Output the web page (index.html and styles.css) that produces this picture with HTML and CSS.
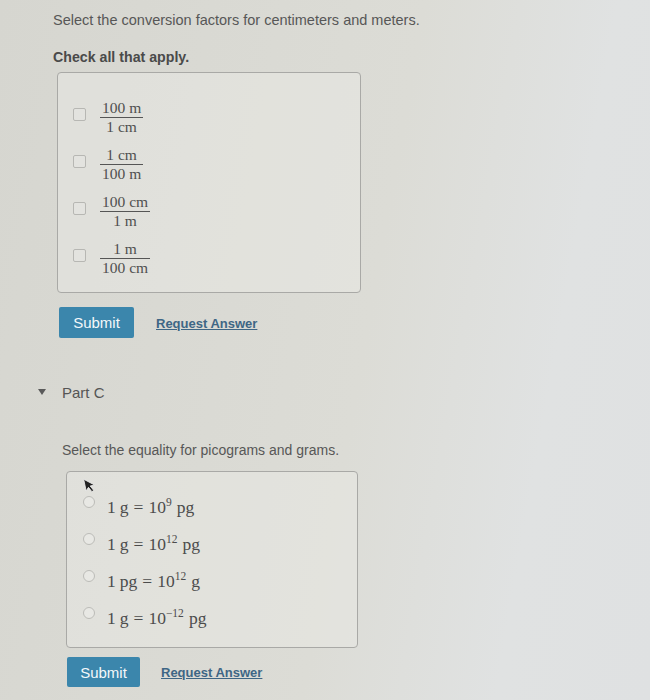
FILE: index.html
```html
<!DOCTYPE html>
<html>
<head>
<meta charset="utf-8">
<link rel="stylesheet" href="styles.css">
</head>
<body>
<div class="page">
  <section class="part1">
    <p class="q1">Select the conversion factors for centimeters and meters.</p>
    <p class="check">Check all that apply.</p>
    <div class="box box1">
      <div class="opt"><span class="cb"></span><span class="frac"><span class="num">100 m</span><span class="den">1 cm</span></span></div>
      <div class="opt"><span class="cb"></span><span class="frac"><span class="num">1 cm</span><span class="den">100 m</span></span></div>
      <div class="opt"><span class="cb"></span><span class="frac"><span class="num">100 cm</span><span class="den">1 m</span></span></div>
      <div class="opt"><span class="cb"></span><span class="frac"><span class="num">1 m</span><span class="den">100 cm</span></span></div>
    </div>
    <div class="actions actions1">
      <button class="submit">Submit</button>
      <a class="req" href="#">Request Answer</a>
    </div>
  </section>

  <section class="partc">
    <div class="part-head"><span class="tri"></span><span class="part-title">Part C</span></div>
    <div class="part-body">
      <p class="q2">Select the equality for picograms and grams.</p>
      <div class="box box2">
        <div class="ropt"><span class="rb"></span><span class="math">1<span class="sp"></span>g<span class="eq">=</span>10<sup>9</sup><span class="sp2"></span>pg</span></div>
        <div class="ropt"><span class="rb"></span><span class="math">1<span class="sp"></span>g<span class="eq">=</span>10<sup>12</sup><span class="sp2"></span>pg</span></div>
        <div class="ropt"><span class="rb"></span><span class="math">1<span class="sp"></span>pg<span class="eq">=</span>10<sup>12</sup><span class="sp2"></span>g</span></div>
        <div class="ropt"><span class="rb"></span><span class="math">1<span class="sp"></span>g<span class="eq">=</span>10<sup>−12</sup><span class="sp2"></span>pg</span></div>
        <svg class="cursor" width="12" height="16" viewBox="0 0 12 16"><path d="M1 1 L1 13 L4 10 L6.5 15 L8.5 14 L6 9 L10.5 9 Z" fill="#222" stroke="#eee" stroke-width="0.8"/></svg>
      </div>
      <div class="actions actions2">
        <button class="submit submit2">Submit</button>
        <a class="req" href="#">Request Answer</a>
      </div>
    </div>
  </section>
</div>
</body>
</html>
```

FILE: styles.css
```css
html, body {
  margin: 0;
  padding: 0;
}
body {
  width: 650px;
  height: 700px;
  overflow: hidden;
  background: linear-gradient(100deg, #d6d6d0 0%, #dcdcd6 55%, #e0e2e2 80%, #dfe1e2 100%);
  font-family: "Liberation Sans", Arial, sans-serif;
  color: #575757;
}
.page {
  padding-top: 11px;
}
p { margin: 0; }

.part1 {
  margin-left: 53px;
}
.q1 {
  font-size: 14.5px;
  line-height: 18px;
}
.check {
  margin-top: 19px;
  font-size: 14.2px;
  line-height: 18px;
  font-weight: bold;
  color: #4a4a4a;
}
.box {
  box-sizing: border-box;
  border: 1px solid #a9a9a6;
  border-radius: 4px;
  background: rgba(235, 235, 230, 0.45);
  position: relative;
}
.box1 {
  margin-top: 6px;
  margin-left: 4px;
  width: 304px;
  height: 221px;
  padding-top: 21px;
}
.opt {
  height: 47px;
  display: flex;
  align-items: center;
}
.cb {
  width: 11px;
  height: 11px;
  border: 1px solid #b7b7b3;
  border-radius: 2px;
  background: #e3e3df;
  margin-left: 15px;
  margin-bottom: 6px;
}
.frac {
  margin-left: 14px;
  display: inline-flex;
  flex-direction: column;
  align-items: center;
  font-family: "Liberation Serif", "Times New Roman", serif;
  font-size: 15.5px;
  line-height: 16px;
  color: #505050;
}
.num {
  padding: 0 2px 1px;
  border-bottom: 1px solid #555;
  align-self: stretch;
  text-align: center;
}
.den {
  padding: 1px 2px 0;
}

.actions {
  display: flex;
  align-items: center;
}
.actions1 {
  margin-top: 14px;
  margin-left: 6px;
}
.submit {
  width: 75px;
  height: 31px;
  border: none;
  border-radius: 2px;
  background: #3b86ac;
  color: #f4f8fa;
  font-family: "Liberation Sans", Arial, sans-serif;
  font-size: 15px;
  padding: 0;
}
.req {
  margin-left: 22px;
  font-size: 13px;
  font-weight: bold;
  color: #3e6685;
  text-decoration: underline;
  margin-top: 1px;
}

.partc {
  margin-top: 44px;
}
.part-head {
  display: flex;
  align-items: center;
  height: 20px;
  padding-left: 38px;
}
.tri {
  width: 0;
  height: 0;
  border-left: 4.5px solid transparent;
  border-right: 4.5px solid transparent;
  border-top: 6px solid #5a5a5a;
}
.part-title {
  margin-left: 16px;
  font-size: 15px;
  color: #555;
}
.part-body {
  margin-left: 62px;
}
.q2 {
  margin-top: 39px;
  font-size: 14px;
  line-height: 18px;
}
.box2 {
  margin-top: 12px;
  margin-left: 4px;
  width: 292px;
  height: 177px;
  padding-top: 16px;
}
.ropt {
  height: 37px;
  display: flex;
  align-items: center;
}
.rb {
  width: 10px;
  height: 10px;
  border: 1px solid #bcbcb8;
  border-radius: 50%;
  background: #e8e8e4;
  margin-left: 16px;
  margin-bottom: 9px;
}
.math {
  margin-left: 12px;
  font-family: "Liberation Serif", "Times New Roman", serif;
  font-size: 17.5px;
  line-height: 20px;
  color: #4c4c4c;
  white-space: nowrap;
}
.math sup {
  font-size: 11.5px;
  line-height: 0;
  vertical-align: 7px;
}
.sp { display: inline-block; width: 4px; }
.sp2 { display: inline-block; width: 5px; }
.eq { margin: 0 5px; }
.cursor {
  position: absolute;
  left: 17px;
  top: 5px;
  transform: rotate(-12deg);
}
.actions2 {
  margin-top: 9px;
  margin-left: 5px;
}
.submit2 {
  width: 73px;
  height: 30px;
}
.actions2 .req {
  margin-left: 21px;
}
```
